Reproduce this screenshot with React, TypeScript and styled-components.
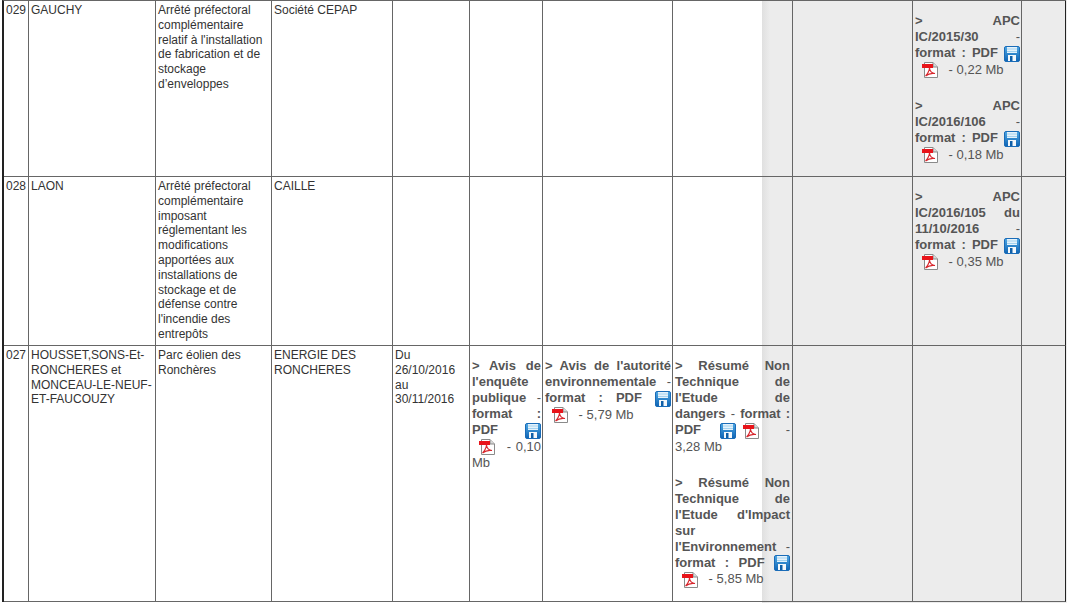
import React from "react";
import styled, { createGlobalStyle } from "styled-components";

const Global = createGlobalStyle`
  html, body { margin: 0; padding: 0; background: #fff; }
  body { overflow: hidden; }
`;

const Page = styled.div`
  width: 1067px;
  height: 603px;
  overflow: hidden;
  box-sizing: border-box;
  padding-left: 2px;
  background: linear-gradient(to right, #fff 762px, #e0e0e0 762px, #ececec 770px);
  font-family: "Liberation Sans", Arial, sans-serif;
`;

const Table = styled.table`
  border-collapse: separate;
  border-spacing: 0;
  table-layout: fixed;
  width: 1064px;
  border-top: 1px solid #666;
  border-left: 2px solid #222;
  font-size: 12px;
  line-height: 14.8px;
  color: #333;
`;

const Row = styled.tr<{ $h: number }>`
  height: ${(p) => p.$h}px;
`;

const Cell = styled.td`
  box-sizing: border-box;
  vertical-align: top;
  padding: 2px 1px 0 2px;
  border-right: 1px solid #666;
  border-bottom: 1px solid #666;
  overflow: visible;

  &:last-child {
    border-right-color: #222;
  }
`;

const Col = styled.col<{ $w: number }>`
  width: ${(p) => p.$w}px;
`;

const Doc = styled.p`
  margin: 10px 0 20px;
  text-align: justify;
  line-height: 16px;
  color: #555;
  font-size: 13px;

  &:last-child {
    margin-bottom: 0;
  }
`;

const Strong = styled.b`
  font-weight: bold;
`;

const Svg = styled.svg<{ $ml?: number; $mr?: number }>`
  width: 16px;
  height: 16px;
  vertical-align: middle;
  margin-left: ${(p) => p.$ml ?? 0}px;
  margin-right: ${(p) => p.$mr ?? 0}px;
`;

const Save = () => (
  <Svg viewBox="0 0 16 16">
    <defs>
      <linearGradient id="floppy" x1="0" y1="0" x2="0" y2="1">
        <stop offset="0" stopColor="#4fa8e4" />
        <stop offset="1" stopColor="#0f64b4" />
      </linearGradient>
    </defs>
    <rect x="0.5" y="0.5" width="15" height="15" rx="1.5" fill="url(#floppy)" stroke="#1a6cb8" />
    <rect x="3" y="1" width="10" height="6" fill="#e4f2fb" />
    <rect x="3" y="2.5" width="10" height="1" fill="#a4d2ef" />
    <rect x="3" y="5" width="10" height="1" fill="#a4d2ef" />
    <rect x="4" y="9" width="8" height="6" fill="#f4f8fb" />
    <rect x="6" y="10" width="2.5" height="5" fill="#0f5fa8" />
  </Svg>
);

const Pdf = () => (
  <Svg viewBox="0 0 16 16" $ml={7} $mr={7}>
    <path d="M2.5 0.5H11L15.5 5V15.5H2.5Z" fill="#fff" stroke="#8a8a8a" />
    <path d="M11 0.5V5H15.5" fill="#d8d8d8" stroke="#8a8a8a" />
    <rect x="0" y="2" width="11" height="4" fill="#e8141a" />
    <path
      d="M3.5 14C5 13 7.5 8.5 7.5 6C7.5 9 10 11.5 13 11.5C10 11 6 12 3.5 14Z"
      fill="none"
      stroke="#d8262c"
      strokeWidth="1.2"
    />
  </Svg>
);

const Entry = ({ title, size }: { title: string; size: string }) => (
  <Doc>
    <Strong>{title}</Strong> - <Strong>format : PDF</Strong> <Save /><Pdf /> - {size}
  </Doc>
);

const DocCell = styled(Cell)`
  padding-right: 2px;
`;

const widths = [25, 127, 116, 121, 77, 73, 130, 120, 120, 109, 44];

export default function App() {
  return (
    <Page>
      <Global />
      <Table>
        <colgroup>
          {widths.map((w, i) => (
            <Col key={i} $w={w} />
          ))}
        </colgroup>
        <tbody>
          <Row $h={176}>
            <Cell>029</Cell>
            <Cell>GAUCHY</Cell>
            <Cell>Arrêté préfectoral complémentaire relatif à l'installation de fabrication et de stockage d’enveloppes</Cell>
            <Cell>Société CEPAP</Cell>
            <Cell />
            <Cell />
            <Cell />
            <Cell />
            <Cell />
            <Cell>
              <Entry title="> APC IC/2015/30" size="0,22 Mb" />
              <Entry title="> APC IC/2016/106" size="0,18 Mb" />
            </Cell>
            <Cell />
          </Row>
          <Row $h={169}>
            <Cell>028</Cell>
            <Cell>LAON</Cell>
            <Cell>Arrêté préfectoral complémentaire imposant réglementant les modifications apportées aux installations de stockage et de défense contre l'incendie des entrepôts</Cell>
            <Cell>CAILLE</Cell>
            <Cell />
            <Cell />
            <Cell />
            <Cell />
            <Cell />
            <Cell>
              <Entry title="> APC IC/2016/105 du 11/10/2016" size="0,35 Mb" />
            </Cell>
            <Cell />
          </Row>
          <Row $h={256}>
            <Cell>027</Cell>
            <Cell>HOUSSET,SONS-Et-RONCHERES et MONCEAU-LE-NEUF-ET-FAUCOUZY</Cell>
            <Cell>Parc éolien des Ronchères</Cell>
            <Cell>ENERGIE DES RONCHERES</Cell>
            <Cell>Du 26/10/2016 au 30/11/2016</Cell>
            <Cell>
              <Entry title="> Avis de l'enquête publique" size="0,10 Mb" />
            </Cell>
            <Cell>
              <Entry title="> Avis de l'autorité environnementale" size="5,79 Mb" />
            </Cell>
            <DocCell>
              <Entry title="> Résumé Non Technique de l'Etude de dangers" size={"3,28\u00a0Mb"} />
              <Entry title="> Résumé Non Technique de l'Etude d'Impact sur l'Environnement" size="5,85 Mb" />
            </DocCell>
            <Cell />
            <Cell />
            <Cell />
          </Row>
        </tbody>
      </Table>
    </Page>
  );
}
